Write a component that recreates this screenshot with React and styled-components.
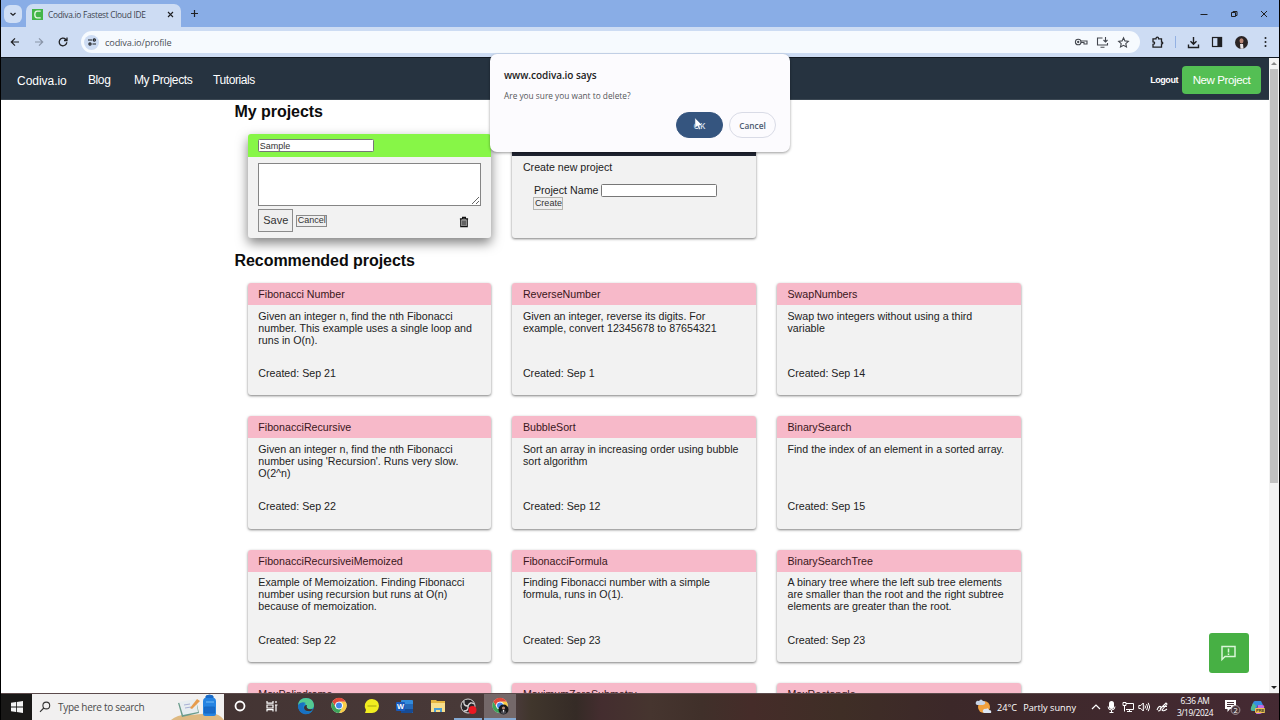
import styled, { createGlobalStyle } from "styled-components";

const ink = `#1f2023`
const stripBlue = `#89ade6`
const toolbarBlue = `#cddcf3`
const navDark = `#263340`
const pink = `#f7b9c9`
const lime = `#87f647`
const cardGrey = `#f2f2f2`

const cardShadow = `0 1px 3px rgba(0, 0, 0, .35), 0 1px 2px rgba(0, 0, 0, .2)`

const GlobalStyle = createGlobalStyle`
  * {
    box-sizing: border-box;
  }

  body {
    margin: 0;
    overflow: hidden;
    background: #000;
    font-family: "Liberation Sans", Arial, sans-serif;
  }

  button, input, textarea {
    font-family: inherit;
    margin: 0;
  }
`;

const Screen = styled.div`
  position: relative;
  display: flex;
  flex-direction: column;
  width: 1280px;
  height: 720px;
  padding: 0 1px;
  overflow: hidden;
`;

/* browser */

const TabStrip = styled.div`
  display: flex;
  align-items: center;
  height: 27px;
  flex: none;
  background: ${stripBlue};
`;

const TabSearch = styled.div`
  display: flex;
  align-items: center;
  justify-content: center;
  width: 18px;
  height: 18px;
  margin-left: 3px;
  border-radius: 6px;
  background: #cfdef5;
  color: ${ink};
`;

const Tab = styled.div`
  display: flex;
  align-items: center;
  align-self: flex-end;
  width: 155px;
  height: 23px;
  margin-left: 4px;
  padding: 0 7px 3px 6px;
  border-radius: 7px 7px 0 0;
  background: ${toolbarBlue};
  font: 8.4px "Open Sans", sans-serif;
  color: #3c4450;

  span {
    flex: 1;
    margin-left: 5px;
    white-space: nowrap;
    letter-spacing: -0.3px;
  }
`;

const NewTab = styled.div`
  display: flex;
  margin-left: 9px;
`;

const WindowButtons = styled.div`
  display: flex;
  align-items: center;
  gap: 22px;
  margin-left: auto;
  margin-right: 11px;
`;

const Toolbar = styled.div`
  display: flex;
  align-items: center;
  height: 31px;
  flex: none;
  padding-left: 8px;
  background: ${toolbarBlue};
  border-bottom: 1px solid #111820;
`;

const HistoryButtons = styled.div`
  display: flex;
  align-items: center;
  gap: 12px;
  width: 72px;
`;

const Omnibox = styled.div`
  display: flex;
  align-items: center;
  width: 1059px;
  height: 22px;
  padding: 0 10px 0 3px;
  border-radius: 11px;
  background: #f6fafe;
  font: 9.2px "Open Sans", sans-serif;
  color: #4b5058;

  p {
    flex: 1;
    margin: 0 0 0 6px;
    letter-spacing: -0.15px;
  }
`;

const SiteChip = styled.div`
  display: flex;
  align-items: center;
  justify-content: center;
  width: 15px;
  height: 15px;
  border-radius: 50%;
  background: #cddcf3;
`;

const OmniIcons = styled.div`
  display: flex;
  align-items: center;
  gap: 8px;
`;

const ToolbarIcons = styled.div`
  display: flex;
  align-items: center;
  margin-left: 11px;
`;

const Divider = styled.i`
  width: 1px;
  height: 12px;
  margin: 0 11px 0 11px;
  background: #93b1e3;
`;

const Gap = styled.i`
  width: ${({ $w }) => $w}px;
`;

/* site */

const Viewport = styled.div`
  display: flex;
  height: 635px;
  flex: none;
  background: #fff;
`;

const Site = styled.div`
  flex: 1;
  min-width: 0;
  overflow: hidden;
`;

const Nav = styled.nav`
  display: flex;
  align-items: center;
  height: 42px;
  padding: 2px 8px 0 16px;
  background: ${navDark};
  border-bottom: 1px solid #3c4853;
  color: #fff;
  font-size: 12px;
  letter-spacing: -0.4px;
`;

const Brand = styled.span`
  width: 71px;
  padding-top: 2px;
  font-size: 12px;
  letter-spacing: -0.03px;
`;

const NavLink = styled.span`
  width: ${({ $w }) => $w}px;
  white-space: nowrap;
`;

const Logout = styled.span`
  margin-left: auto;
  margin-right: 4px;
  font: bold 9px "Liberation Sans", Arial, sans-serif;
  letter-spacing: -0.45px;
`;

const NewProjectBtn = styled.button`
  width: 79px;
  height: 28px;
  padding: 0;
  border: none;
  border-radius: 4px;
  background: #54bf54;
  color: #fff;
  font-size: 11.5px;
  letter-spacing: -0.4px;
`;

const Content = styled.main`
  padding-left: 233.5px;
`;

const Heading = styled.h2`
  height: 19px;
  margin: ${({ $top }) => $top}px 0 0;
  font-size: 16px;
  line-height: 19px;
  letter-spacing: -0.05px;
  color: #0c0c0c;
`;

const CardGrid = styled.div`
  display: grid;
  grid-template-columns: repeat(3, 243.6px);
  column-gap: 21px;
  row-gap: 21px;
  margin: ${({ $top }) => $top}px 0 0 13.3px;
`;

const Card = styled.section`
  height: ${({ $h }) => $h || 112.4}px;
  border-radius: 3px;
  overflow: hidden;
  background: ${cardGrey};
  box-shadow: ${({ $lifted }) => $lifted ? `0 5px 12px rgba(0, 0, 0, .5)` : cardShadow};
  font-size: 10.67px;
  line-height: 12px;
  color: #222;
`;

const CardTitle = styled.header`
  height: 22px;
  padding: 1px 10.5px 0;
  line-height: 21px;
  background: ${pink};
  color: #3a1620;
`;

const CardText = styled.p`
  height: 57.5px;
  margin: 4.5px 10px 0 10.5px;
  white-space: pre-line;

  & + & {
    margin-top: 0;
  }
`;

const LimeHeader = styled.header`
  display: flex;
  align-items: center;
  height: 23px;
  padding-left: 10.5px;
  background: ${lime};
`;

const TextInput = styled.input`
  width: 116px;
  height: 13px;
  padding: 0 0.5px;
  border: 1px solid #777;
  border-radius: 1.5px;
  background: #fff;
  color: #333;
  font-size: 9px;
`;

const Description = styled.textarea`
  display: block;
  width: 223px;
  height: 43px;
  margin: 6px 0 0 10.5px;
  padding: 1px;
  border: 1px solid #858585;
  background: #fff;
  resize: vertical;
`;

const Actions = styled.div`
  display: flex;
  align-items: center;
  margin: 3px 0 0 10.5px;
  padding-right: 22px;

  svg {
    margin-left: auto;
    margin-top: 2px;
  }
`;

const FormBtn = styled.button`
  width: ${({ $w }) => $w}px;
  height: ${({ $h }) => $h}px;
  padding: 0;
  border: 1px solid #8b8b8b;
  border-radius: 0;
  background: #efefef;
  color: #333;
  font-size: ${({ $size }) => $size || 9}px;
  line-height: 1;
`;

const CreateHeader = styled.header`
  height: 22px;
  background: #202431;
`;

const CreateForm = styled.form`
  padding: 5px 10.5px;

  p {
    margin: 0 0 11px;
  }

  div {
    display: flex;
    align-items: center;
    gap: 2.5px;
    height: 12px;
    margin-left: 11px;
  }

  > button {
    display: block;
    margin-left: 10.5px;
    margin-top: 1px;
    border-color: #b5b5b0;
  }
`;

const Scrollbar = styled.div`
  display: flex;
  flex-direction: column;
  align-items: center;
  justify-content: space-between;
  width: 10px;
  padding: 4px 0 4px;
  background: #f3f3f3;
`;

const Thumb = styled.div`
  width: 8px;
  height: 414px;
  margin-top: 4px;
  margin-bottom: auto;
  background: #c1c1c1;
`;

const Arrow = styled.i`
  border: 3px solid transparent;
  border-top-width: ${({ $up }) => $up ? 0 : 3}px;
  border-bottom-width: ${({ $up }) => $up ? 3 : 0}px;
  border-top-color: #222;
  border-bottom-color: #888;
`;

const Feedback = styled.div`
  position: absolute;
  left: 1209px;
  top: 633px;
  display: flex;
  align-items: center;
  justify-content: center;
  width: 40px;
  height: 40px;
  border-radius: 3px;
  background: #47b044;
`;

/* confirm dialog */

const Dialog = styled.div`
  position: absolute;
  left: 490px;
  top: 54px;
  width: 300px;
  height: 98px;
  padding: 14px;
  border-radius: 7px;
  background: #fcfbfe;
  box-shadow: 0 1px 3px rgba(0, 0, 0, .4);
  color: #222;
  font-family: "Open Sans", sans-serif;

  h3 {
    margin: 0;
    font-size: 10px;
    font-weight: 600;
    line-height: 15px;
    letter-spacing: -0.05px;
  }

  p {
    margin: 6px 0 0;
    font-size: 8.3px;
    line-height: 13px;
    color: #55565a;
  }
`;

const DialogButtons = styled.div`
  display: flex;
  justify-content: flex-end;
  gap: 6px;
  margin-top: 10px;
`;

const DialogBtn = styled.button`
  width: 47px;
  height: 26px;
  padding: 0;
  border: 1px solid ${({ $primary }) => $primary ? `#35557f` : `#d9dbe6`};
  border-radius: 13px;
  background: ${({ $primary }) => $primary ? `#35557f` : `#fcfbfe`};
  color: ${({ $primary }) => $primary ? `#dbe4f0` : `#4c5a70`};
  font-family: "Open Sans", sans-serif;
  font-size: 8.3px;
  font-weight: 600;
`;

const Cursor = styled.svg`
  position: absolute;
  left: 204px;
  top: 63px;
`;

/* taskbar */

const Taskbar = styled.footer`
  display: flex;
  align-items: center;
  height: 27px;
  flex: none;
  background: linear-gradient(90deg, #40302f 0, #493a39 515px, #40362c 530px, #352b26 575px, #442d2f 600px, #46352f 650px, #40302a 700px, #452c29 750px, #3f2e26 840px, #3c2829 950px, #452a33 1280px);
  border-top: 1px solid #5b4a4b;
  color: #fff;
  font: 10px "Open Sans", sans-serif;
`;

const Start = styled.div`
  display: flex;
  align-items: center;
  justify-content: center;
  width: 31px;
  height: 26px;
  background: #191817;
`;

const Search = styled.div`
  display: flex;
  align-items: center;
  width: 192px;
  height: 26px;
  padding-left: 7px;
  background: #f1f0f0;
  color: #4a4a4a;
  font-size: 10px;
  letter-spacing: -0.3px;

  span {
    margin-left: 7px;
    white-space: nowrap;
  }

  svg:last-child {
    margin-left: auto;
  }
`;

const TaskApp = styled.div`
  display: flex;
  align-items: center;
  justify-content: center;
  width: ${({ $w }) => $w || 33}px;
  height: 26px;
  background: ${({ $active }) => $active ? `#746869` : `transparent`};
  border-bottom: 2px solid ${({ $open }) => $open ? `#84a9d3` : `transparent`};
`;

const Tray = styled.div`
  display: flex;
  align-items: center;
  margin-left: auto;
  height: 26px;
  padding-right: 13px;
  font-size: 9.2px;
  white-space: nowrap;
`;

const Clock = styled.div`
  display: flex;
  flex-direction: column;
  align-items: center;
  width: 38px;
  margin: 0 10px 0 8px;
  font-size: 8.3px;
  line-height: 12px;
  letter-spacing: -0.35px;
`;

const Line = ({ size = 12, box = 12, w = 1.2, color = ink, children }) => (
    <svg width={size} height={size} viewBox={`0 0 ${box} ${box}`} fill="none" stroke={color} strokeWidth={w}>
        {children}
    </svg>
);

const ChromeLogo = ({ badge }) => (
    <svg width="17" height="18" viewBox="0 0 17 18">
        <circle cx="8" cy="8.5" r="7.6" fill="#fff" />
        <path d="M1.4 4.7A7.6 7.6 0 0 1 14.6 4.7H8A3.8 3.8 0 0 0 4.7 10.4Z" fill="#e24a3b" />
        <path d="M14.6 4.7A7.6 7.6 0 0 1 8 16.1L11.3 10.4A3.8 3.8 0 0 0 8 4.7Z" fill="#f8cc46" />
        <path d="M1.4 4.7L4.7 10.4A3.8 3.8 0 0 0 11.3 10.4L8 16.1A7.6 7.6 0 0 1 1.4 4.7Z" fill="#3ea45a" />
        <circle cx="8" cy="8.5" r="3.7" fill="#fff" />
        <circle cx="8" cy="8.5" r="3" fill="#4485e8" />
        {badge && <>
            <circle cx="11.5" cy="12.5" r="5" fill="#171819" />
            <circle cx="11.5" cy="11" r="1.6" fill="#b48878" />
            <path d="M8.7 16q.5-3 2.8-3t2.8 3q-3 2-5.6 0" fill="#4a4a52" />
            <path d="M11 13h1.2l-.6 3z" fill="#fff" />
        </>}
    </svg>
);

const projects = [
    ["Fibonacci Number", "Given an integer n, find the nth Fibonacci\nnumber. This example uses a single loop and\nruns in O(n).", "Sep 21"],
    ["ReverseNumber", "Given an integer, reverse its digits. For\nexample, convert 12345678 to 87654321", "Sep 1"],
    ["SwapNumbers", "Swap two integers without using a third\nvariable", "Sep 14"],
    ["FibonacciRecursive", "Given an integer n, find the nth Fibonacci\nnumber using 'Recursion'. Runs very slow.\nO(2^n)", "Sep 22"],
    ["BubbleSort", "Sort an array in increasing order using bubble\nsort algorithm", "Sep 12"],
    ["BinarySearch", "Find the index of an element in a sorted array.", "Sep 15"],
    ["FibonacciRecursiveiMemoized", "Example of Memoization. Finding Fibonacci\nnumber using recursion but runs at O(n)\nbecause of memoization.", "Sep 22"],
    ["FibonacciFormula", "Finding Fibonacci number with a simple\nformula, runs in O(1).", "Sep 23"],
    ["BinarySearchTree", "A binary tree where the left sub tree elements\nare smaller than the root and the right subtree\nelements are greater than the root.", "Sep 23"],
    ["MaxPalindrome"],
    ["MaximumZeroSubmetry"],
    ["MaxRectangle"],
];

const ProjectCard = ({ title, text, created }) => (
    <Card>
        <CardTitle>{title}</CardTitle>
        {text && <CardText>{text}</CardText>}
        {created && <CardText>Created: {created}</CardText>}
    </Card>
);

const BrowserTop = () => (
    <>
        <TabStrip>
            <TabSearch><Line size={8} box={8}><path d="M1.5 3L4 5.3 6.5 3" /></Line></TabSearch>
            <Tab>
                <svg width="11" height="11" viewBox="0 0 11 11">
                    <rect width="11" height="11" fill="#43b649" />
                    <path d="M8.7 2.2H5.2Q2.8 2.2 2.8 5.5T5.2 8.8H8.7" fill="none" stroke="#e6f7e6" strokeWidth="1.3" />
                </svg>
                <span>Codiva.io Fastest Cloud IDE</span>
                <Line size={7} box={7} w={1.1}><path d="M1 1l5 5M6 1L1 6" /></Line>
            </Tab>
            <NewTab><Line size={9} box={9}><path d="M4.5 1v7M1 4.5h7" /></Line></NewTab>
            <WindowButtons>
                <Line size={8} box={8} w={1}><path d="M.5 4.5h7" /></Line>
                <Line size={8} box={8} w={1}><path d="M1.5 2.5h4v4h-4zM3 2.5v-1h4v4H5.5" /></Line>
                <Line size={8} box={8} w={1}><path d="M1 1l6 6M7 1L1 7" /></Line>
            </WindowButtons>
        </TabStrip>
        <Toolbar>
            <HistoryButtons>
                <Line><path d="M10 6H2.5M6 2.3L2.3 6 6 9.7" /></Line>
                <Line color="#8995a8"><path d="M2 6h7.5M6 2.3L9.7 6 6 9.7" /></Line>
                <Line w={1.3}><path d="M9.8 6.2A3.8 3.8 0 1 1 8.6 3.2L9.8 4.4M10 1.5v3H7" /></Line>
            </HistoryButtons>
            <Omnibox>
                <SiteChip><Line size={10} box={10}><path d="M1 3h4M5.5 7h3.5" /><circle cx="7.3" cy="3" r="1.1" /><circle cx="3" cy="7" r="1.1" /></Line></SiteChip>
                <p>codiva.io/profile</p>
                <OmniIcons>
                    <Line size={14} box={14} w={1.1} color="#44484f"><circle cx="4.2" cy="7" r="2.8" /><circle cx="4.2" cy="7" r=".6" /><path d="M7 6h6v3h-3V7.5H7" /></Line>
                    <Line size={13} box={13} w={1.1} color="#44484f"><path d="M6.5 2H1.5v7h10V7M4.5 11.3h4M9.5 1v5M7.5 4l2 2 2-2" /></Line>
                    <Line size={13} box={13} w={1.1} color="#44484f"><path d="M6.5 1.8l1.4 3.1 3.4.4-2.5 2.3.7 3.4-3-1.7-3 1.7.7-3.4L1.7 5.3l3.4-.4z" /></Line>
                </OmniIcons>
            </Omnibox>
            <ToolbarIcons>
                <Line size={13} box={13} w={1.3}><path d="M2 2.8h3q0-1.6 1.3-1.6t1.3 1.6h2.9V6q1.3 0 1.3 1t-1.3 1v3.2H2V8.4q1.6 0 1.6-1.3T2 5.8z" /></Line>
                <Divider />
                <Line size={13} box={13} w={1.4}><path d="M6.5 1v7M3.5 5.3l3 3 3-3M1.5 8.5v3h10v-3" /></Line>
                <Gap $w={11} />
                <Line size={12} box={12}><rect x="1.5" y="1.5" width="9" height="9" /><path d="M7 1.5h3.5v9H7z" fill={ink} /></Line>
                <Gap $w={11.5} />
                <svg width="13" height="13" viewBox="0 0 13 13">
                    <circle cx="6.5" cy="6.5" r="6.5" fill="#2a2425" />
                    <ellipse cx="6.5" cy="4.8" rx="2" ry="2.6" fill="#b98676" />
                    <path d="M5 8h3l.5 4.7H5.5z" fill="#e9e5e8" />
                </svg>
                <Gap $w={15} />
                <svg width="5" height="12" viewBox="0 0 5 12" fill={ink}><circle cx="2.5" cy="2" r="1" /><circle cx="2.5" cy="6" r="1" /><circle cx="2.5" cy="10" r="1" /></svg>
            </ToolbarIcons>
        </Toolbar>
    </>
);

const TaskbarRow = () => (
    <Taskbar>
        <Start>
            <svg width="12" height="12" viewBox="0 0 12 12" fill="#f3f3f3"><path d="M0 1.8L5 1v4.6H0zM5.8.9L12 0v5.6H5.8zM0 6.4h5V11l-5-.8zM5.8 6.4H12V12l-6.2-.9z" /></svg>
        </Start>
        <Search>
            <Line color="#333" w={1.1}><circle cx="7.3" cy="4.5" r="3.4" /><path d="M4.8 7L1 10.8" /></Line>
            <span>Type here to search</span>
            <svg width="53" height="26" viewBox="0 0 53 26">
                <path d="M0 26q7-6 20-5l20-2q9 1 13 7z" fill="#deb982" />
                <path d="M7 9l18-3 3 13-17 4z" fill="#6a9b8b" />
                <path d="M8 8l17-3 2 13-15 3z" fill="#e7edf0" />
                <path d="M13 11l6-1M14 14l6-1" stroke="#a7afd4" fill="none" />
                <path d="M19 14l7-9 3 2-8 8z" fill="#e69c4d" />
                <path d="M32 7q0-4 6.5-4T45 7v13q0 2-2 2h-9q-2 0-2-2z" fill="#2583e2" />
                <path d="M35 4V2q3.5-2 7 0v2M33.5 13h10v6h-10z" fill="#176acb" stroke="#1768c0" />
                <path d="M35 8h8" stroke="#76bdf5" />
            </svg>
        </Search>
        <TaskApp $w={32}><Line color="#fff" w={1.8}><circle cx="6" cy="6" r="4.5" /></Line></TaskApp>
        <TaskApp $w={32}><Line color="#fff" w={1.2}><path d="M1 1v2.2h6V1M1 5h6v3H1zM1 11.5V9.7h6v1.8M10 1v2M10 5v6.5M9 5h2.5" /></Line></TaskApp>
        <TaskApp $w={35}>
            <svg width="18" height="18" viewBox="0 0 18 18">
                <circle cx="9" cy="9" r="8" fill="#168bd0" />
                <path d="M1 8Q2 1 9 1q7 0 8 7 0 4-4 4-4-.3-3-3Q7 4 1 8" fill="#54ca91" />
                <path d="M1 8q3-4 8-2-4 1-2 6 3 5 8 2-3 4-8 3-6-2-6-9" fill="#1971c3" />
                <path d="M10 8q-2 5 6 4l-2 2q-6 1-7-3 0-3 3-3" fill="#40302f" />
            </svg>
        </TaskApp>
        <TaskApp $w={32}><ChromeLogo /></TaskApp>
        <TaskApp>
            <svg width="16" height="16" viewBox="0 0 16 16"><path d="M1 15l1-3Q0 9 1 6q2-5 7-5 7 1 7 7-1 7-7 7H1z" fill="#f1ed20" /><path d="M3.5 8h9" stroke="#b5b115" strokeWidth="1.2" /></svg>
        </TaskApp>
        <TaskApp>
            <svg width="17" height="15" viewBox="0 0 17 15">
                <rect x="5" y="1" width="12" height="13" rx="1" fill="#328bdd" /><path d="M5 5h12v5H5z" fill="#2468b7" /><path d="M5 10h12v3l-1 1H5z" fill="#174b94" />
                <rect y="3" width="9" height="9" rx="1" fill="#185abd" />
                <text x="1" y="10.2" fill="#fff" fontSize="7.5" fontWeight="bold" fontFamily="Liberation Sans">W</text>
            </svg>
        </TaskApp>
        <TaskApp>
            <svg width="16" height="14" viewBox="0 0 16 14"><path d="M1 1h5l1 1h8v11H1z" fill="#e6b742" /><path d="M1 4h14v9H1z" fill="#f8df8c" /><path d="M4 13V9h8v4h-2v-2H6v2z" fill="#4c9fd3" /></svg>
        </TaskApp>
        <TaskApp $w={28} $open>
            <svg width="17" height="16" viewBox="0 0 17 16">
                <circle cx="8" cy="8" r="7" fill="#282629" stroke="#d8d6d7" />
                <path d="M8 8Q3 8 4 3M8 8q2-5 6-2M8 8q1 5-4 5" fill="none" stroke="#d8d6d7" strokeWidth="1.4" />
                <circle cx="12.5" cy="12" r="4" fill="#ea1822" />
            </svg>
        </TaskApp>
        <Gap $w={2} />
        <TaskApp $w={32} $open $active><ChromeLogo badge /></TaskApp>
        <Tray>
            <svg width="17" height="16" viewBox="0 0 17 16">
                <circle cx="9" cy="8" r="6" fill="#f0a03d" />
                <path d="M2 6Q0 5 1 3q1-2 3-1 2-3 4 0 3 0 2 3L8 6z" fill="#c8d5e7" />
                <path d="M9 14q-2-1-1-3 2-2 3-1 2-2 3 1 3 0 2 3z" fill="#dce6f4" />
            </svg>
            <Gap $w={5} />
            <span>24°C</span>
            <Gap $w={6} />
            <span>Partly sunny</span>
            <Gap $w={15} />
            <Line size={10} box={10} color="#fff"><path d="M1 7l4-4 4 4" /></Line>
            <Gap $w={6} />
            <svg width="9" height="12" viewBox="0 0 9 12"><rect x="2" width="5" height="8" rx="2.5" fill="#fff" /><path d="M1 5.5Q1 9 4.5 9T8 5.5M4.5 9v2.5M2.5 11.5h4" fill="none" stroke="#fff" /></svg>
            <Gap $w={6} />
            <Line color="#fff" w={1}><path d="M4 2.5h7.5v6H4M7.5 8.5v2M5 10.5h5M1 1.5h3v3H1zM2.5 4.5v6" /></Line>
            <Gap $w={4} />
            <Line color="#fff" w={1}><path d="M.8 4.5h2l2.5-2.5v8L2.8 7.5h-2zM7 4.5q1 1.5 0 3M8.6 3q2 3 0 6M10.2 1.8q3 4.2 0 8.4" /></Line>
            <Gap $w={6} />
            <Line color="#fff" w={1.1}><path d="M1 9q2-5 4-3 0 4-3 4M4 8l6-6 1 1-5 6q1 2 5-1M6 5.5h5" /></Line>
            <Clock><span>6:36 AM</span><span>3/19/2024</span></Clock>
            <svg width="17" height="16" viewBox="0 0 17 16">
                <path d="M1 1h11v9H6l-2.5 3v-3H1z" fill="#fff" />
                <path d="M3 3.5h7M3 5.5h7M3 7.5h4" stroke="#49343a" fill="none" />
                <circle cx="11.5" cy="11" r="4.4" fill="#49353b" stroke="#c6bbbe" strokeWidth=".7" />
                <text x="9.4" y="13.6" fill="#fff" fontSize="7.5" fontFamily="Open Sans">2</text>
            </svg>
            <Gap $w={9} />
            <svg width="16" height="15" viewBox="0 0 16 15">
                <path d="M5 1h6l2 4H8L5 11H3Q0 11 1 8l2-5q.5-2 2-2" fill="#368cdf" />
                <path d="M1 8l2-5 3 3-2 5Q0 11 1 8" fill="#50bd90" />
                <path d="M8 5h4q3 0 2 3l-2 5q-1 1-3 1H6z" fill="#c46be1" />
                <rect x="5" y="8" width="10" height="5" rx="1" fill="#f3c254" />
                <text x="6" y="12.2" fill="#332" fontSize="4.2" fontWeight="bold" fontFamily="Liberation Sans">PRE</text>
            </svg>
        </Tray>
    </Taskbar>
);

export default function App() {
    return (
        <Screen>
            <GlobalStyle />
            <BrowserTop />
            <Viewport>
                <Site>
                    <Nav>
                        <Brand>Codiva.io</Brand>
                        <NavLink $w={46}>Blog</NavLink>
                        <NavLink $w={79}>My Projects</NavLink>
                        <NavLink $w={60}>Tutorials</NavLink>
                        <Logout>Logout</Logout>
                        <NewProjectBtn>New Project</NewProjectBtn>
                    </Nav>
                    <Content>
                        <Heading $top={2}>My projects</Heading>
                        <CardGrid $top={13}>
                            <Card $h={104} $lifted>
                                <LimeHeader><TextInput defaultValue="Sample" /></LimeHeader>
                                <Description />
                                <Actions>
                                    <FormBtn $w={35} $h={23} $size={11}>Save</FormBtn>
                                    <Gap $w={3} />
                                    <FormBtn $w={31} $h={12}>Cancel</FormBtn>
                                    <svg width="10" height="12" viewBox="0 0 11 12" fill="none" stroke="#111" strokeWidth="1.4"><path d="M1 2.5h9M4 2V1h3v1M2 3v8h7V3M4.4 4v6M6.6 4v6" /></svg>
                                </Actions>
                            </Card>
                            <Card $h={104}>
                                <CreateHeader />
                                <CreateForm>
                                    <p>Create new project</p>
                                    <div>
                                        <label>Project Name</label>
                                        <TextInput />
                                    </div>
                                    <FormBtn type="button" $w={30} $h={13}>Create</FormBtn>
                                </CreateForm>
                            </Card>
                        </CardGrid>
                        <Heading $top={13}>Recommended projects</Heading>
                        <CardGrid $top={13}>
                            {projects.map(([title, text, created]) => (
                                <ProjectCard key={title} title={title} text={text} created={created} />
                            ))}
                        </CardGrid>
                    </Content>
                </Site>
                <Scrollbar>
                    <Arrow $up />
                    <Thumb />
                    <Arrow />
                </Scrollbar>
            </Viewport>
            <TaskbarRow />
            <Feedback>
                <Line size={18} box={18} w={1.5} color="#d9f5d8"><path d="M2 15.5v-13h13v10H5z M8.5 4.5v4M8.5 9.5v1.5" /></Line>
            </Feedback>
            <Dialog>
                <h3>www.codiva.io says</h3>
                <p>Are you sure you want to delete?</p>
                <DialogButtons>
                    <DialogBtn $primary>OK</DialogBtn>
                    <DialogBtn>Cancel</DialogBtn>
                </DialogButtons>
                <Cursor width="10" height="14" viewBox="0 0 10 14"><path d="M1 1v10l2.5-2L5 12.5l1.6-.7L5.2 8.5h3.3z" fill="#fff" stroke="#526e96" strokeWidth=".5" /></Cursor>
            </Dialog>
        </Screen>
    );
}
